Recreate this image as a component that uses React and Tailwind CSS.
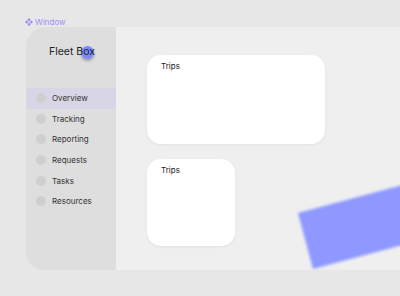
import React from "react";

const nav = ["Overview", "Tracking", "Reporting", "Requests", "Tasks", "Resources"];

export default function App() {
  return (
    <div
      className="w-[400px] h-[296px] bg-[#e7e7e7] overflow-hidden relative"
      style={{ fontFamily: "Inter, 'Noto Sans', sans-serif" }}
    >
      <div className="flex items-center gap-[2px] pl-[25px] pt-[17px] h-[27px] text-[8px] leading-none text-[#a08df7]">
        <svg width="8" height="8" viewBox="0 0 8 8" fill="#a08df7">
          <path d="M4 0 L5.7 1.7 L4 3.4 L2.3 1.7 Z" />
          <path d="M4 4.6 L5.7 6.3 L4 8 L2.3 6.3 Z" />
          <path d="M1.7 2.3 L3.4 4 L1.7 5.7 L0 4 Z" />
          <path d="M6.3 2.3 L8 4 L6.3 5.7 L4.6 4 Z" />
        </svg>
        <span>Window</span>
      </div>
      <div className="ml-[26px] h-[243px] flex">
        <div className="w-[90px] shrink-0 bg-[#dedede] rounded-tl-[20px] rounded-bl-[18px] flex flex-col">
          <div className="relative h-[50px] pt-[18px] pl-[23px] flex items-start">
            <div className="absolute left-[55px] top-[18.5px] w-[13px] h-[13px] rounded-full bg-[#7b8bff] shadow-[0_2px_3px_rgba(0,0,0,0.3)]" />
            <span className="relative block text-[10.5px] leading-[14px] text-[#222]">Fleet Box</span>
          </div>
          <div className="mt-[11px] flex flex-col">
            {nav.map((n, i) => (
              <div
                key={n}
                className={
                  "h-[20.6px] flex items-center pl-[10px] gap-[6px] " +
                  (i === 0 ? "bg-[#d8d5e6]" : "")
                }
              >
                <div className="w-[10px] h-[10px] rounded-full bg-[#cfcfcf]" />
                <span className="text-[8px] leading-none text-[#333]">{n}</span>
              </div>
            ))}
          </div>
        </div>
        <div className="flex-1 bg-[#efefef] relative overflow-hidden pl-[31px] pt-[28px] flex flex-col gap-[15px]">
          <div className="w-[178px] h-[89px] bg-white rounded-[14px] shadow-[0_1px_3px_rgba(0,0,0,0.06)] pl-[14px] pt-[7px] text-[8px] leading-none text-[#222]">
            <span className="block">Trips</span>
          </div>
          <div className="w-[88px] h-[87px] bg-white rounded-[14px] shadow-[0_1px_3px_rgba(0,0,0,0.06)] pl-[14px] pt-[7px] text-[8px] leading-none text-[#222]">
            <span className="block">Trips</span>
          </div>
          <div
            className="absolute left-[182px] top-[186px] w-[220px] h-[58px] bg-[#8e98ff] origin-top-left -rotate-[15deg] blur-[1.5px]"
          />
        </div>
      </div>
    </div>
  );
}
